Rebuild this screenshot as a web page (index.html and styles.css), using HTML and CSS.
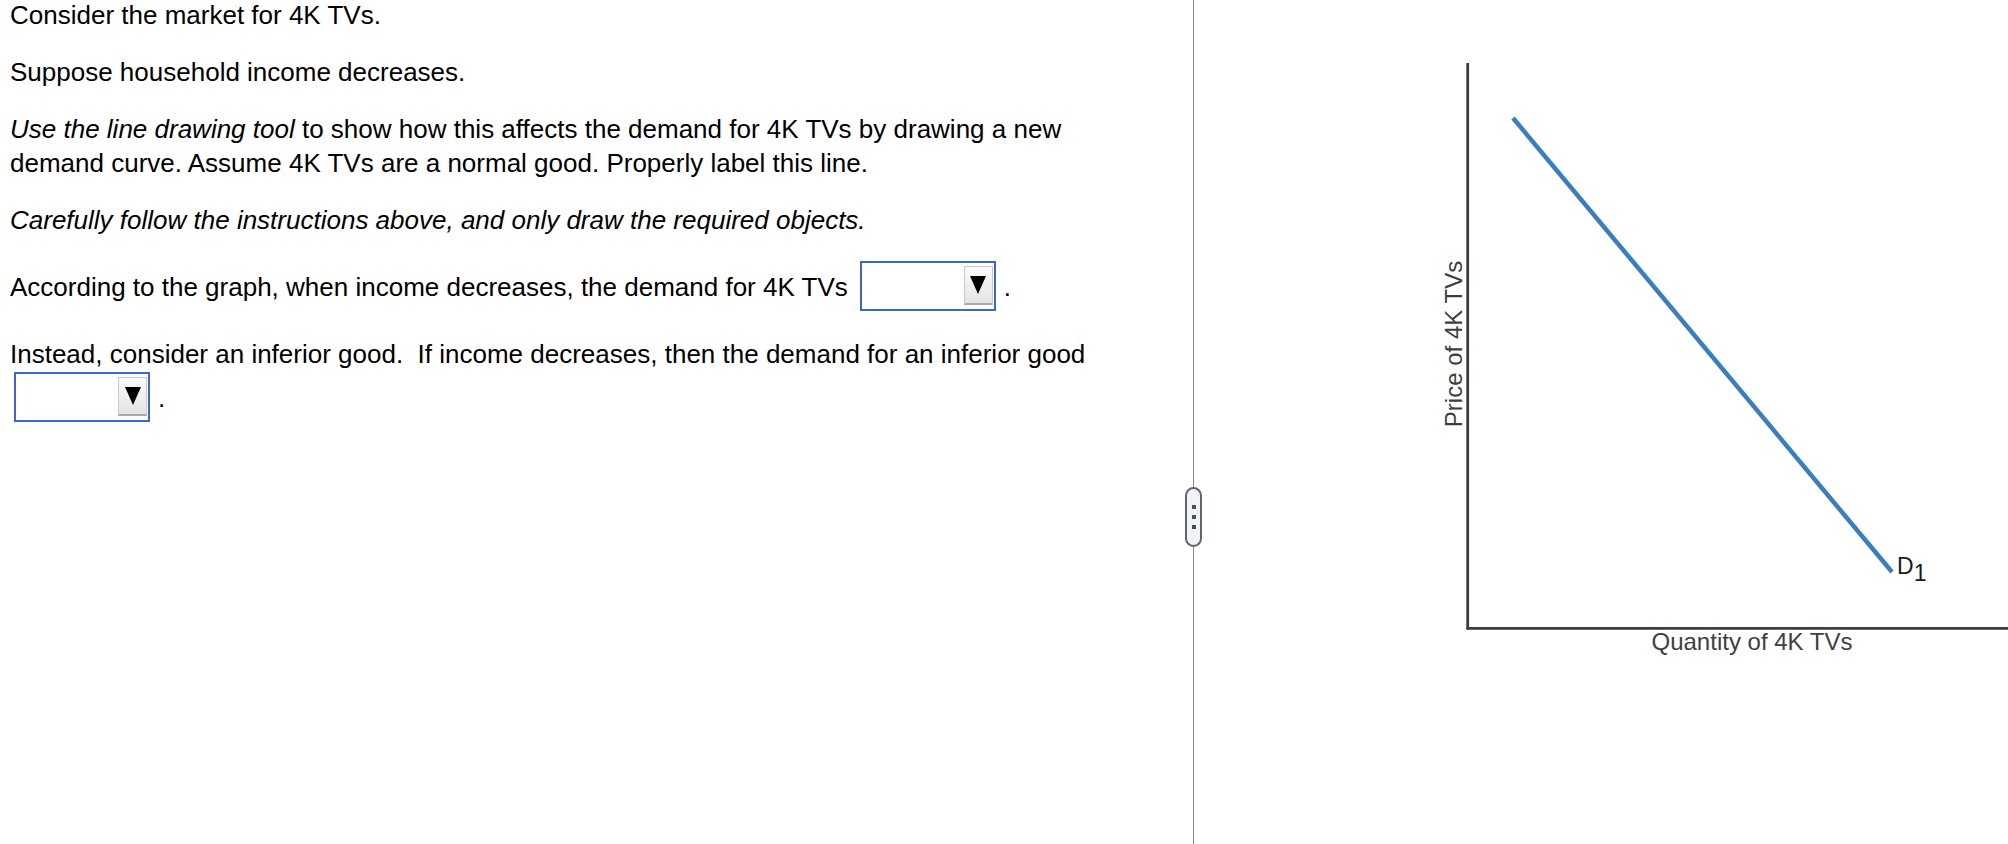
FILE: index.html
```html
<!DOCTYPE html>
<html lang="en">
<head>
<meta charset="utf-8">
<title>Market for 4K TVs</title>
<link rel="stylesheet" href="styles.css">
</head>
<body>
<div class="page">
  <section class="question">
    <p>Consider the market for 4K TVs.</p>
    <p>Suppose household income decreases.</p>
    <p><em>Use the line drawing tool</em> to show how this affects the demand for 4K TVs by drawing a new demand curve. Assume 4K TVs are a normal good. Properly label this line.</p>
    <p><em>Carefully follow the instructions above, and only draw the required objects.</em></p>
    <p>According to the graph, when income decreases, the demand for 4K TVs<span class="dropdown"><span class="dd-button"><span class="dd-arrow"></span></span></span>.</p>
    <p>Instead, consider an inferior good.&nbsp; If income decreases, then the demand for an inferior good <span class="dropdown first"><span class="dd-button"><span class="dd-arrow"></span></span></span>.</p>
  </section>
  <div class="divider">
    <div class="rule rule-top"></div>
    <div class="handle">
      <span class="dot"></span><span class="dot"></span><span class="dot"></span>
    </div>
    <div class="rule rule-bottom"></div>
  </div>
  <section class="graph">
    <svg class="chart" width="806" height="844" viewBox="0 0 806 844">
      <line class="axis" x1="265.7" y1="63" x2="265.7" y2="629.5"></line>
      <line class="axis" x1="264.5" y1="628.3" x2="806" y2="628.3"></line>
      <line class="curve" x1="311" y1="118" x2="690" y2="572"></line>
      <text class="curve-label" x="695" y="574">D<tspan dy="7">1</tspan></text>
      <text class="axis-label" x="550" y="650" text-anchor="middle">Quantity of 4K TVs</text>
      <text class="axis-label" transform="translate(260 344) rotate(-90)" text-anchor="middle">Price of 4K TVs</text>
    </svg>
  </section>
</div>
</body>
</html>
```
FILE: styles.css
```css
html, body {
  margin: 0;
  padding: 0;
  background: #ffffff;
}

body {
  font-family: "Liberation Sans", Arial, Helvetica, sans-serif;
  color: #000000;
  font-size: 26px;
  line-height: 33.5px;
}

.page {
  display: flex;
  height: 844px;
  overflow: hidden;
}

.question {
  flex: 0 0 1185px;
  box-sizing: border-box;
  padding: 0 0 0 10px;
}

.question p {
  margin: 0 0 23.5px 0;
  max-width: 1105px;
}

.question p:first-child {
  margin-top: -1px;
}

.question em {
  font-style: italic;
}

.dropdown {
  display: inline-block;
  overflow: hidden;
  box-sizing: border-box;
  width: 136px;
  height: 50px;
  margin: 0 8px 4px 12px;
  padding: 3px 1px 0 0;
  border: 2px solid #3e66c8;
  background: #ffffff;
  vertical-align: -19px;
}

.dropdown.first {
  margin-left: 4px;
}

.dd-button {
  display: flex;
  align-items: center;
  justify-content: center;
  box-sizing: border-box;
  width: 29px;
  height: 39px;
  margin-left: auto;
  border: 1px solid #c9c9c9;
  border-bottom: 2px solid #a9a9a9;
  background: linear-gradient(#fbfbfb, #e4e4e4);
}

.dd-arrow {
  width: 0;
  height: 0;
  border-left: 8px solid transparent;
  border-right: 8px solid transparent;
  border-top: 18px solid #000000;
}

.divider {
  flex: 0 0 17px;
  display: flex;
  flex-direction: column;
  align-items: center;
}

.rule {
  width: 1px;
  background: #8a8a8a;
}

.rule-top {
  flex: 0 0 487px;
}

.rule-bottom {
  flex: 1 1 auto;
}

.handle {
  flex: 0 0 60px;
  box-sizing: border-box;
  width: 17px;
  border: 2px solid #5d6671;
  border-radius: 9px;
  background: #f2f3f5;
  display: flex;
  flex-direction: column;
  align-items: center;
  justify-content: center;
  gap: 6px;
}

.dot {
  width: 4px;
  height: 4px;
  background: #4d4d4d;
}

.graph {
  flex: 1 1 auto;
}

.chart {
  display: block;
}

.axis {
  stroke: #3d3d3d;
  stroke-width: 2.8;
}

.curve {
  stroke: #3a7dc0;
  stroke-width: 4.5;
}

.curve-label {
  font-family: "Liberation Sans", Arial, sans-serif;
  font-size: 23px;
  fill: #1a1a1a;
}

.axis-label {
  font-family: "Liberation Sans", Arial, sans-serif;
  font-size: 24px;
  fill: #404040;
}
```
